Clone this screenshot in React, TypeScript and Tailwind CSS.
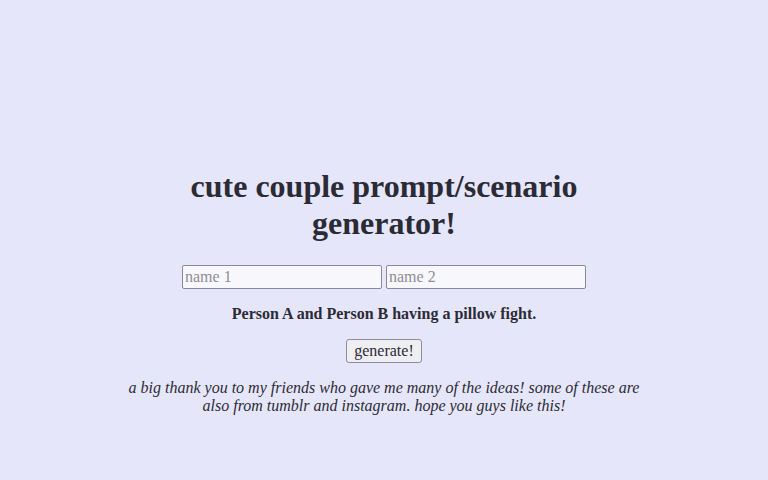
import { useState } from "react";

const scenarios = [
  "having a pillow fight.",
  "baking cookies together at 2am.",
  "getting caught in the rain.",
];

export default function App() {
  const [a, setA] = useState("");
  const [b, setB] = useState("");
  const [idx, setIdx] = useState(0);

  const nameA = a.trim() || "Person A";
  const nameB = b.trim() || "Person B";

  return (
    <div
      className="min-h-screen bg-[#e6e6fa] text-[#2b2b36] leading-[normal] text-center pt-[147px] pb-4"
      style={{ fontFamily: '"Liberation Serif", "Times New Roman", serif' }}
    >
      <div className="mx-auto w-[520px]">
        <h1 className="text-[32px] font-bold leading-[normal] mt-[21.44px] mb-[22.5px]">
          cute couple prompt/scenario generator!
        </h1>
        <div className="flex justify-center gap-[4px]">
          <input
            value={a}
            onChange={(e) => setA(e.target.value)}
            placeholder="name 1"
            className="w-[200px] h-[24px] px-[2px] text-[16px] leading-[normal] bg-[#f8f8fc] border border-[#8a8798] rounded-[2px] placeholder:text-[#8e8e96] outline-none"
          />
          <input
            value={b}
            onChange={(e) => setB(e.target.value)}
            placeholder="name 2"
            className="w-[200px] h-[24px] px-[2px] text-[16px] leading-[normal] bg-[#f8f8fc] border border-[#8a8798] rounded-[2px] placeholder:text-[#8e8e96] outline-none"
          />
        </div>
        <p className="my-4 font-bold text-[16px]">
          {nameA} and {nameB} {scenarios[idx]}
        </p>
        <button
          onClick={() => setIdx((i) => (i + 1) % scenarios.length)}
          className="h-[24px] px-[7px] text-[16px] leading-[normal] bg-[#efeff3] border border-[#8e8c98] rounded-[3px] text-[#2b2b36]"
        >
          generate!
        </button>
        <p className="my-4 italic text-[16px] leading-[18px]">
          a big thank you to my friends who gave me many of the ideas! some of
          these are also from tumblr and instagram. hope you guys like this!
        </p>
      </div>
    </div>
  );
}
